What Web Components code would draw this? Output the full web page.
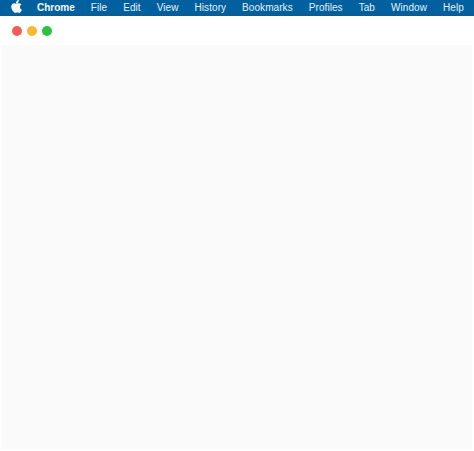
<!DOCTYPE html>
<html>
<head>
<meta charset="utf-8">
<title>Chrome window</title>
<style>
  html, body { margin: 0; height: 100%; background: #fff; }
  body { display: flex; flex-direction: column; height: 451px; overflow: hidden; }
</style>
</head>
<body>
<mac-menubar>
  <mac-menu bold>Chrome</mac-menu>
  <mac-menu>File</mac-menu>
  <mac-menu>Edit</mac-menu>
  <mac-menu>View</mac-menu>
  <mac-menu>History</mac-menu>
  <mac-menu>Bookmarks</mac-menu>
  <mac-menu>Profiles</mac-menu>
  <mac-menu>Tab</mac-menu>
  <mac-menu>Window</mac-menu>
  <mac-menu>Help</mac-menu>
</mac-menubar>
<mac-window></mac-window>
<script>
class MacMenubar extends HTMLElement {
  constructor() {
    super()
    this.attachShadow({ mode: 'open' })
    this.shadowRoot.innerHTML = `
      <style>
        :host {
          display: flex;
          align-items: center;
          flex: none;
          height: 15px;
          padding-left: 11px;
          background: #03609f;
          border-bottom: 1px solid #0b5a90;
          box-sizing: content-box;
          color: #e6f0f7;
          font: 10px "Liberation Sans", Arial, sans-serif;
          letter-spacing: 0.07px;
        }
        svg { width: 11px; height: 13px; flex: none; margin: -2px 15px 0 0; fill: #f4f8fb; }
        .items { display: flex; gap: 16px; margin-top: -1px; }
      </style>
      <svg viewBox="0 0 22 26" aria-hidden="true">
        <path d="M15.8 0c.2 2-.6 3.6-1.600 4.800-1.100 1.300-2.700 2.200-4.300 2.100-.2-1.800.6-3.600 1.600-4.700C12.600 1 14.300.1 15.800 0zM21 8.900c-1.800 1.100-3 2.900-3 5 0 2.500 1.500 4.500 3.800 5.400-.6 1.700-1.400 3.200-2.500 4.700-1 1.300-2 2-3.200 2-1.300 0-2-.8-3.800-.8s-2.600.8-3.900.8c-1.200 0-2.300-.9-3.400-2.300C2.500 21.100.5 17 .5 13.400c0-4.500 2.900-7 5.800-7 1.500 0 2.900 1 4 1 1 0 2.600-1.100 4.400-1.100 2.400 0 4.800 1 6.300 2.600z"/>
      </svg>
      <div class="items"><slot></slot></div>
    `
  }
}

class MacMenu extends HTMLElement {
  constructor() {
    super()
    this.attachShadow({ mode: 'open' })
    this.shadowRoot.innerHTML = `
      <style>
        :host { display: block; white-space: nowrap; }
        :host([bold]) { font-weight: 700; letter-spacing: 0; color: #f4f8fb; }
      </style>
      <slot></slot>
    `
  }
}

class MacWindow extends HTMLElement {
  constructor() {
    super()
    this.attachShadow({ mode: 'open' })
    this.shadowRoot.innerHTML = `
      <style>
        :host { display: flex; flex-direction: column; flex: 1; background: #fff; }
        .titlebar {
          display: flex;
          align-items: center;
          gap: 5px;
          height: 29px;
          flex: none;
          padding-left: 12px;
        }
        .dot { width: 10px; height: 10px; border-radius: 50%; }
        .close { background: #f25e57; }
        .min { background: #fbb733; }
        .max { background: #2dc13f; }
        .content { flex: 1; margin: 0 2px 2px; background: #fafafa; }
      </style>
      <div class="titlebar">
        <span class="dot close"></span>
        <span class="dot min"></span>
        <span class="dot max"></span>
      </div>
      <div class="content"></div>
    `
  }
}

customElements.define('mac-menubar', MacMenubar)
customElements.define('mac-menu', MacMenu)
customElements.define('mac-window', MacWindow)
</script>
</body>
</html>
